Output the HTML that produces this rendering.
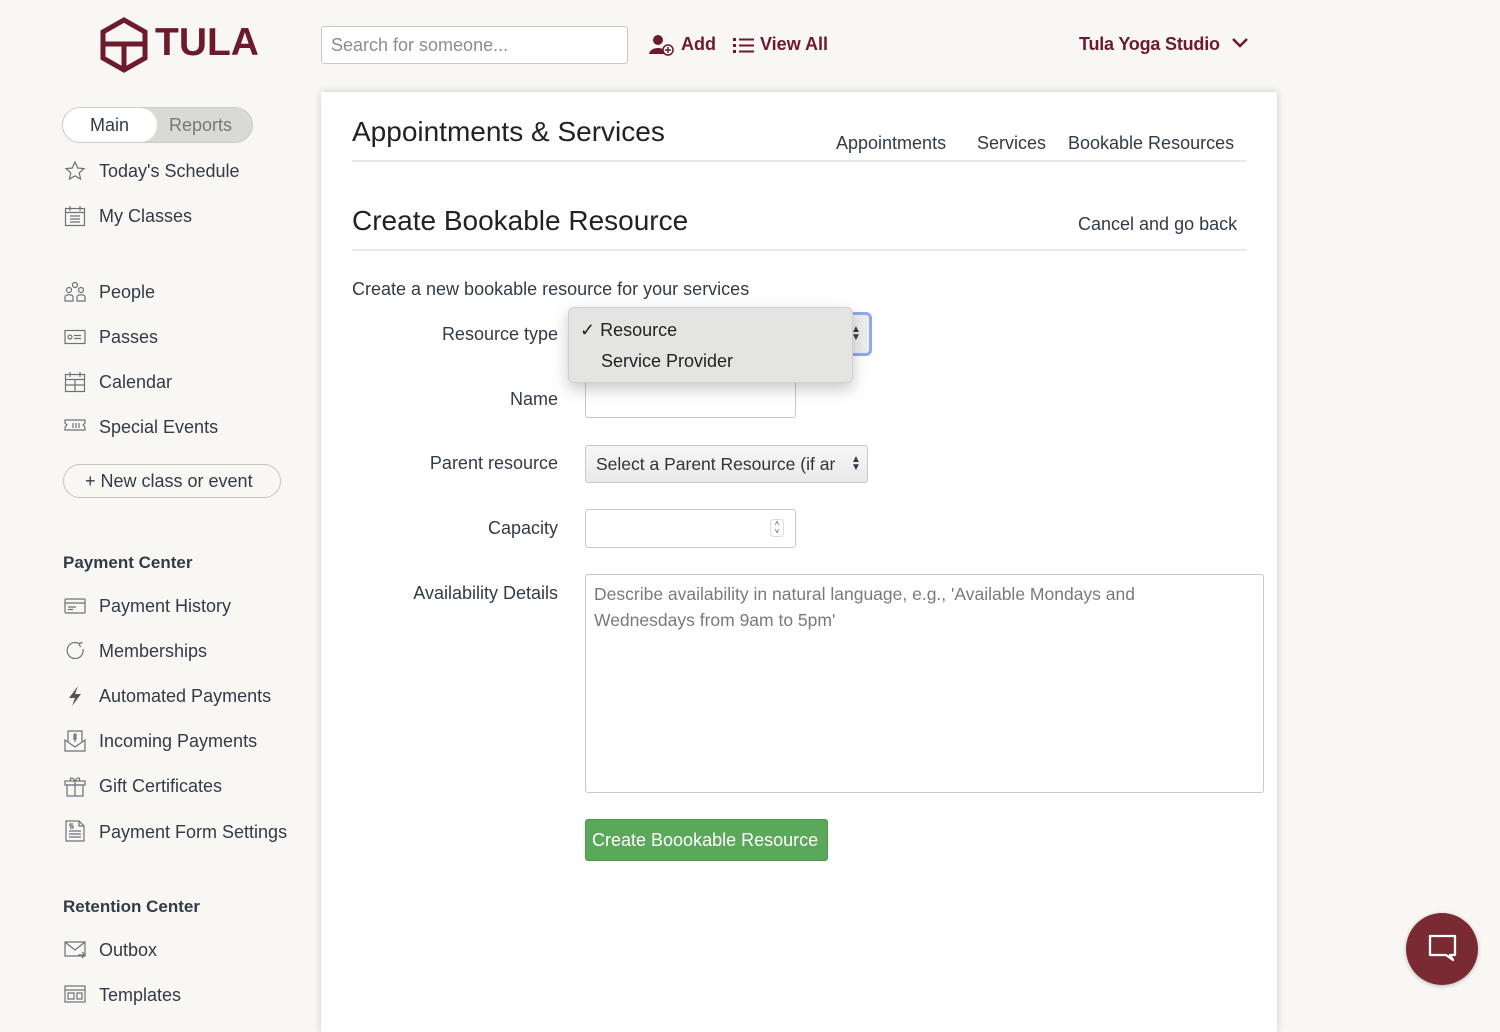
<!DOCTYPE html>
<html><head><meta charset="utf-8"><style>
*{box-sizing:border-box;margin:0;padding:0}
body{width:1500px;height:1016px;overflow:hidden;background:#f8f7f3;font-family:"Liberation Sans",sans-serif;color:#323b48;position:relative}
.a{position:absolute;white-space:nowrap}
.nav{font-size:18px;color:#323b48}
.ic{position:absolute;left:64px;width:22px;height:22px}
.ic svg{width:22px;height:22px;fill:none;stroke:#6d727a;stroke-width:1.2}
.hd{font-size:17px;font-weight:bold;color:#323b48}
.panel{position:absolute;left:321px;top:92px;width:956px;height:940px;background:#fff;box-shadow:0 0 8px rgba(0,0,0,.18)}
.lbl{font-size:18px;text-align:right;width:240px;left:318px}
.inp{position:absolute;border:1px solid #c8c8c8;border-radius:3px;background:#fff}
</style></head><body>
<svg class="a" style="left:98px;top:16px" width="52" height="58" viewBox="0 0 52 58"><g fill="none" stroke="#6c1a2c" stroke-width="5"><path d="M26 4 L47 16 L47 42 L26 54 L5 42 L5 16 Z"/><path d="M5 28 H47 M26 28 V54"/></g></svg>
<div class="a" style="left:155px;top:21px;font-size:39px;font-weight:bold;color:#6c1a2c">TULA</div>
<div class="inp" style="left:321px;top:26px;width:307px;height:38px"></div>
<div class="a" style="left:331px;top:35px;font-size:18px;color:#8a8d92">Search for someone...</div>
<svg class="a" style="left:648px;top:33px" width="28" height="24" viewBox="0 0 28 24"><circle cx="10" cy="7" r="5" fill="#6c1a2c"/><path d="M1 21 C2 13 18 13 19 21Z" fill="#6c1a2c"/><circle cx="20" cy="17" r="5" fill="#fff" stroke="#6c1a2c" stroke-width="1.5"/><path d="M20 14v6M17 17h6" stroke="#6c1a2c" stroke-width="1.5"/></svg>
<div class="a" style="left:681px;top:34px;font-size:18px;font-weight:bold;color:#6c1a2c">Add</div>
<svg class="a" style="left:733px;top:37px" width="22" height="16" viewBox="0 0 22 16"><g fill="#6c1a2c"><rect x="0" y="1" width="3" height="3"/><rect x="0" y="7" width="3" height="3"/><rect x="0" y="13" width="3" height="3"/><rect x="6" y="1.5" width="15" height="2"/><rect x="6" y="7.5" width="15" height="2"/><rect x="6" y="13.5" width="15" height="2"/></g></svg>
<div class="a" style="left:760px;top:34px;font-size:18px;font-weight:bold;color:#6c1a2c">View All</div>
<div class="a" style="left:1079px;top:34px;font-size:18px;font-weight:bold;color:#6c1a2c;letter-spacing:-0.2px">Tula Yoga Studio</div>
<svg class="a" style="left:1231px;top:37px" width="18" height="12" viewBox="0 0 18 12"><path d="M2 2 L9 9 L16 2" fill="none" stroke="#6c1a2c" stroke-width="2.5"/></svg>

<div class="a" style="left:62px;top:107px;width:191px;height:36px;border-radius:18px;background:#d9d9d6;border:1px solid #ccc"></div>
<div class="a" style="left:63px;top:108px;width:94px;height:34px;border-radius:17px;background:#fff"></div>
<div class="a" style="left:90px;top:115px;font-size:18px">Main</div>
<div class="a" style="left:169px;top:115px;font-size:18px;color:#777">Reports</div>

<div class="ic" style="top:160px"><svg viewBox="0 0 22 22"><path d="M11 2l2.7 6 6.3.6-4.8 4.2 1.4 6.3L11 15.8 5.4 19.1l1.4-6.3L2 8.6l6.3-.6z"/></svg></div>
<div class="a nav" style="left:99px;top:161px">Today's Schedule</div>
<div class="ic" style="top:205px"><svg viewBox="0 0 22 22"><rect x="1.5" y="3.5" width="19" height="17"/><path d="M1.5 7.5h19M6 1v5M16 1v5M6 11h10M6 14h10M6 17h10"/></svg></div>
<div class="a nav" style="left:99px;top:206px">My Classes</div>
<div class="ic" style="top:281px"><svg viewBox="0 0 22 22"><circle cx="11" cy="4" r="2.5"/><circle cx="5" cy="9" r="2.5"/><circle cx="17" cy="9" r="2.5"/><path d="M1 20v-4c0-3 8-3 8 0v4zM13 20v-4c0-3 8-3 8 0v4z"/></svg></div>
<div class="a nav" style="left:99px;top:282px">People</div>
<div class="ic" style="top:326px"><svg viewBox="0 0 22 22"><rect x="1" y="4.5" width="20" height="13"/><circle cx="6" cy="11" r="2"/><path d="M10 9.5h7M10 12.5h7"/></svg></div>
<div class="a nav" style="left:99px;top:327px">Passes</div>
<div class="ic" style="top:371px"><svg viewBox="0 0 22 22"><rect x="1.5" y="3.5" width="19" height="17"/><path d="M1.5 8.5h19M11 8.5v12M1.5 14h19M6 1v5M16 1v5"/></svg></div>
<div class="a nav" style="left:99px;top:372px">Calendar</div>
<div class="ic" style="top:416px"><svg viewBox="0 0 22 22"><path d="M1 4h20v3l-2 2 2 2v3H1v-3l2-2-2-2zM9 7v5M12 7v5M15 7v5"/></svg></div>
<div class="a nav" style="left:99px;top:417px">Special Events</div>
<div class="a" style="left:63px;top:464px;width:218px;height:34px;border:1px solid #c4c4c2;border-radius:17px"></div>
<div class="a nav" style="left:85px;top:471px">+ New class or event</div>

<div class="a hd" style="left:63px;top:553px">Payment Center</div>
<div class="ic" style="top:595px"><svg viewBox="0 0 22 22"><rect x="1" y="4" width="20" height="14" rx="1"/><path d="M1 8h20M4 12h8M4 14.5h5"/></svg></div>
<div class="a nav" style="left:99px;top:596px">Payment History</div>
<div class="ic" style="top:640px"><svg viewBox="0 0 22 22"><path d="M15 3.5A8 8 0 1 0 19 9M15 3.5l1.5 3.5M15 3.5l3.5-1"/></svg></div>
<div class="a nav" style="left:99px;top:641px">Memberships</div>
<div class="ic" style="top:685px"><svg viewBox="0 0 22 22"><path d="M14 1L5 13h6l-3 8 9-12h-6z" fill="#555" stroke="none"/></svg></div>
<div class="a nav" style="left:99px;top:686px">Automated Payments</div>
<div class="ic" style="top:730px"><svg viewBox="0 0 22 22"><path d="M1 10v11h20V10L11 17zM4 12V1h14v11M11 3v9M13 5h-3v2h2v2H9"/></svg></div>
<div class="a nav" style="left:99px;top:731px">Incoming Payments</div>
<div class="ic" style="top:775px"><svg viewBox="0 0 22 22"><rect x="1" y="6" width="20" height="4"/><rect x="3" y="10" width="16" height="11"/><path d="M11 6v15M11 6C8 1 5 3 7 6M11 6c3-5 6-3 4 0"/></svg></div>
<div class="a nav" style="left:99px;top:776px">Gift Certificates</div>
<div class="ic" style="top:820px"><svg viewBox="0 0 22 22"><path d="M2 1h13l5 5v15H2zM15 1v5h5M5 11h12M5 14h12M5 17h12M9 4H6v2h3v2H6"/></svg></div>
<div class="a nav" style="left:99px;top:822px">Payment Form Settings</div>

<div class="a hd" style="left:63px;top:897px">Retention Center</div>
<div class="ic" style="top:938px"><svg viewBox="0 0 22 22"><path d="M1 4h20v14H1zM1 4l10 8 10-8M14 17h7M18 14l3 3-3 3"/></svg></div>
<div class="a nav" style="left:99px;top:940px">Outbox</div>
<div class="ic" style="top:983px"><svg viewBox="0 0 22 22"><rect x="1" y="3" width="20" height="16"/><path d="M1 7h20M4 10h6v6H4zM13 10h5v6h-5z"/></svg></div>
<div class="a nav" style="left:99px;top:985px">Templates</div>

<div class="panel"></div>
<div class="a" style="left:352px;top:116px;font-size:28px;color:#222">Appointments &amp; Services</div>
<div class="a" style="left:836px;top:133px;font-size:18px">Appointments</div>
<div class="a" style="left:977px;top:133px;font-size:18px">Services</div>
<div class="a" style="left:1068px;top:133px;font-size:18px">Bookable Resources</div>
<div class="a" style="left:352px;top:160px;width:894px;height:2px;background:#e8e8e8"></div>
<div class="a" style="left:352px;top:205px;font-size:28px;color:#222">Create Bookable Resource</div>
<div class="a" style="left:1078px;top:214px;font-size:18px">Cancel and go back</div>
<div class="a" style="left:352px;top:249px;width:894px;height:2px;background:#e8e8e8"></div>
<div class="a" style="left:352px;top:279px;font-size:18px">Create a new bookable resource for your services</div>

<div class="a lbl" style="top:324px">Resource type</div>
<div class="a lbl" style="top:389px">Name</div>
<div class="a lbl" style="top:453px">Parent resource</div>
<div class="a lbl" style="top:518px">Capacity</div>
<div class="a lbl" style="top:583px">Availability Details</div>

<div class="a" style="left:583px;top:312px;width:289px;height:44px;border:3px solid #8fa9ec;border-radius:6px;background:#eee"></div>
<div class="a" style="left:851px;top:326px;font-size:10px;line-height:8px">▲<br>▼</div>
<div class="inp" style="left:585px;top:380px;width:211px;height:38px"></div>
<div class="inp" style="left:585px;top:445px;width:283px;height:38px;background:linear-gradient(#f7f7f7,#e9e9e9)"></div>
<div class="a" style="left:596px;top:454px;font-size:17.5px;color:#333">Select a Parent Resource (if ar</div>
<div class="a" style="left:851px;top:456px;font-size:10px;line-height:8px">▲<br>▼</div>
<div class="inp" style="left:585px;top:509px;width:211px;height:39px"></div>
<div class="a" style="left:770px;top:519px;width:14px;height:18px;border:1px solid #ddd;border-radius:4px;font-size:8px;line-height:8px;text-align:center;color:#555">˄<br>˅</div>
<div class="inp" style="left:585px;top:574px;width:679px;height:219px"></div>
<div class="a" style="left:594px;top:581px;font-size:17.5px;color:#7a7a7a;line-height:26px">Describe availability in natural language, e.g., 'Available Mondays and<br>Wednesdays from 9am to 5pm'</div>

<div class="a" style="left:568px;top:307px;width:285px;height:76px;background:#e4e4e3;border:1px solid #d0d0d0;border-radius:6px;box-shadow:0 6px 16px rgba(0,0,0,.22)"></div>
<div class="a" style="left:580px;top:320px;font-size:18px;color:#222">✓ Resource</div>
<div class="a" style="left:601px;top:351px;font-size:18px;color:#222">Service Provider</div>

<div class="a" style="left:585px;top:819px;width:243px;height:42px;background:#5aa85a;border:1px solid #4b9a4b;border-radius:3px"></div>
<div class="a" style="left:592px;top:830px;font-size:18px;color:#fff">Create Boookable Resource</div>

<div class="a" style="left:1406px;top:913px;width:72px;height:72px;border-radius:50%;background:#7a2a33;box-shadow:0 1px 4px rgba(0,0,0,.25)"></div>
<svg class="a" style="left:1427px;top:933px" width="32" height="32" viewBox="0 0 32 32"><path d="M3 3h25v19h-5l3 5-7-5H3z" fill="none" stroke="#fff" stroke-width="2.3" stroke-linejoin="round"/></svg>
</body></html>
